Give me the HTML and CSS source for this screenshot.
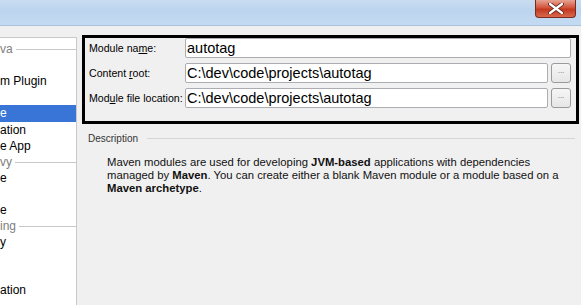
FILE: index.html
```html
<!DOCTYPE html>
<html>
    <head>
        <link rel="stylesheet" href="styles.css">
    </head>

    <body>
        <div class="titlebar">
            <div class="close">
                <svg width="16" height="11" viewBox="0 0 16 11">
                    <path d="M2 1 L14 10 M14 1 L2 10" stroke="#5a1a12" stroke-width="4" stroke-linecap="round"/>
                    <path d="M2 1 L14 10 M14 1 L2 10" stroke="#ffffff" stroke-width="2.4" stroke-linecap="round"/>
                </svg>
            </div>
        </div>

        <div class="window">
            <div class="sidebar">
                <div class="group"><span>va</span><i></i></div>
                <div class="item"></div>
                <div class="item">m Plugin</div>
                <div class="item"></div>
                <div class="item selected">e</div>
                <div class="item">ation</div>
                <div class="item">e App</div>
                <div class="group"><span>vy</span><i></i></div>
                <div class="item">e</div>
                <div class="item"></div>
                <div class="item">e</div>
                <div class="group"><span>ing</span><i></i></div>
                <div class="item">y</div>
                <div class="item"></div>
                <div class="item"></div>
                <div class="item">ation</div>
            </div>

            <div class="main">
                <div class="form">
                    <div class="row">
                        <label>Module na<u>m</u>e:</label>
                        <div class="field">autotag</div>
                    </div>

                    <div class="row">
                        <label>Content <u>r</u>oot:</label>
                        <div class="field">C:\dev\code\projects\autotag</div>
                        <div class="browse">...</div>
                    </div>

                    <div class="row">
                        <label>Mod<u>u</u>le file location:</label>
                        <div class="field">C:\dev\code\projects\autotag</div>
                        <div class="browse">...</div>
                    </div>
                </div>

                <div class="caption"><span>Description</span><i></i></div>

                <p class="description">
                    Maven modules are used for developing <b>JVM-based</b> applications with dependencies<br>
                    managed by <b>Maven</b>. You can create either a blank Maven module or a module based on a<br>
                    <b>Maven archetype</b>.
                </p>
            </div>
        </div>
    </body>
</html>
```

FILE: styles.css
```css
body
{
    margin: 0;
    width: 581px;
    height: 305px;
    overflow: hidden;
    background-color: #f0f0f0;
    font-family: "Liberation Sans", Arial, sans-serif;
    font-size: 11px;
    color: #000000;
}

.titlebar
{
    height: 25px;
    border-bottom: 1px solid #a9c2dc;
    background: linear-gradient(to bottom, #c9ddf1, #bcd5ee 40%, #c3dbf2);
    display: flex;
    justify-content: flex-end;
}

.close
{
    width: 41px;
    height: 18px;
    margin-right: 5px;
    box-sizing: border-box;
    border: 1px solid #7a2a1e;
    border-top: none;
    border-radius: 0 0 4px 4px;
    background: linear-gradient(to bottom, #e6a393, #d2543c 45%, #c2391f 55%, #d9694c);
    display: flex;
    align-items: center;
    justify-content: center;
}

.window
{
    display: flex;
    height: 279px;
}

.sidebar
{
    width: 76px;
    margin-top: 11px;
    padding-top: 3px;
    background-color: #ffffff;
    border-top: 1px solid #c9c9c9;
    border-right: 1px solid #c9c9c9;
}

.item
{
    height: 16px;
    line-height: 16px;
    white-space: nowrap;
    font-size: 12px;
}

.selected
{
    height: 17px;
    line-height: 17px;
    background-color: #3875d7;
    color: #ffffff;
}

.group
{
    height: 16px;
    display: flex;
    align-items: center;
    font-size: 12px;
    color: #7e7e7e;
}

.group i
{
    flex: 1;
    height: 1px;
    margin-left: 3px;
    background-color: #c8c8c8;
}

.main
{
    flex: 1;
    padding-left: 5px;
    padding-top: 9px;
}

.form
{
    width: 491px;
    height: 83px;
    border: 3px solid #000000;
}

.row
{
    display: flex;
    align-items: center;
    height: 20px;
    padding-right: 5px;
}

.row + .row
{
    margin-top: 5px;
}

label
{
    flex-shrink: 0;
    width: 96px;
    padding-left: 4px;
    font-size: 10.6px;
    white-space: nowrap;
}

.field
{
    flex: 1;
    height: 20px;
    box-sizing: border-box;
    padding-left: 1px;
    border: 1px solid #abadb3;
    border-radius: 2px;
    background-color: #ffffff;
    font-size: 14.5px;
    line-height: 18px;
    white-space: nowrap;
}

.browse
{
    flex-shrink: 0;
    width: 20px;
    height: 20px;
    box-sizing: border-box;
    margin-left: 3px;
    border: 1px solid #9a9a9a;
    border-radius: 3px;
    background: linear-gradient(to bottom, #f6f6f6, #e6e6e6);
    color: #666666;
    font-size: 8px;
    text-align: center;
    line-height: 14px;
}

.caption
{
    display: flex;
    align-items: center;
    margin-top: 9px;
    margin-left: 6px;
    margin-right: 6px;
    font-size: 10px;
    color: #333333;
}

.caption i
{
    flex: 1;
    height: 1px;
    margin-left: 9px;
    background-color: #d5d5d5;
}

.description
{
    margin: 12px 0 0 25px;
    line-height: 13px;
    font-size: 11.3px;
    color: #111111;
}
```
